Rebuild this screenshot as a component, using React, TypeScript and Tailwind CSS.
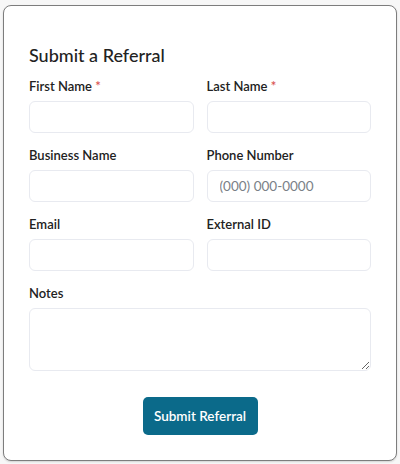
import React from "react";

const font = { fontFamily: 'Lato, "Noto Sans", sans-serif' };

function Field({ label, required, placeholder }: { label: string; required?: boolean; placeholder?: string }) {
  return (
    <div className="flex flex-col">
      <label className="h-[18px] text-[13px] leading-[18px] font-semibold text-[#222]">
        {label}
        {required && <span className="text-[#d9534f]"> *</span>}
      </label>
      <input
        placeholder={placeholder}
        className="mt-[6px] h-[32px] w-full rounded-[6px] border border-[#e8eaf0] bg-white px-[12px] text-[13.5px] text-[#222] placeholder:text-[#7a7f87] outline-none"
      />
    </div>
  );
}

export default function App() {
  return (
    <div className="min-h-screen bg-[#f7f7f7] pl-[3px] pt-[5px]" style={font}>
      <div className="flex h-[456px] w-[394px] flex-col rounded-[8px] border border-[#7d7d7d] bg-white pl-[25px] pt-[37px] shadow-[0_1px_2px_rgba(0,0,0,0.15)]">
        <h2 className="h-[24px] text-[18px] leading-[24px] font-medium text-[#222]">Submit a Referral</h2>
        <div className="mt-[10px] grid w-[342px] grid-cols-2 gap-x-[13px] gap-y-[13px]">
          <Field label="First Name" required />
          <Field label="Last Name" required />
          <Field label="Business Name" />
          <Field label="Phone Number" placeholder="(000) 000-0000" />
          <Field label="Email" />
          <Field label="External ID" />
          <div className="col-span-2 flex flex-col">
            <label className="h-[18px] text-[13px] leading-[18px] font-semibold text-[#222]">Notes</label>
            <textarea className="mt-[6px] h-[63px] w-full rounded-[6px] border border-[#e8eaf0] bg-white px-[12px] py-[6px] text-[13px] outline-none" />
          </div>
        </div>
        <div className="mt-[26px] flex w-[342px] justify-center">
          <button className="h-[38px] w-[115px] rounded-[5px] bg-[#0b6a8a] text-[13.5px] font-semibold text-white">
            Submit Referral
          </button>
        </div>
      </div>
    </div>
  );
}
